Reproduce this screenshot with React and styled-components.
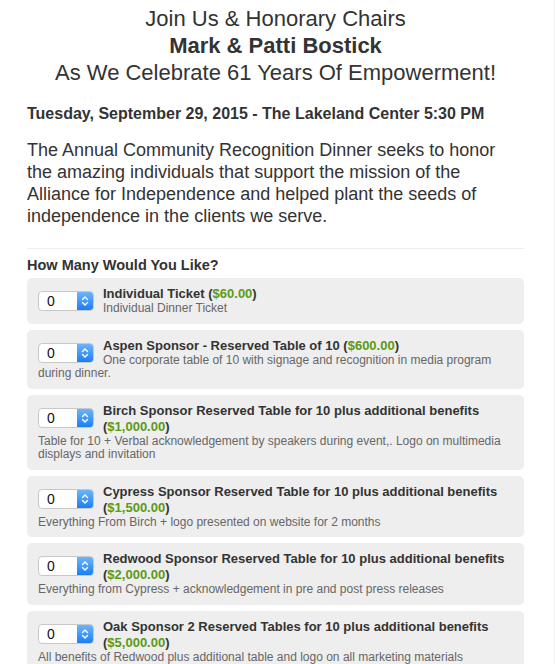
import React from 'react';
import styled, { createGlobalStyle } from 'styled-components';

const GlobalStyle = createGlobalStyle`
    html, body {
        margin: 0;
        padding: 0;
        background: #fff;
    }
    body {
        font-family: "Liberation Sans", Arial, Helvetica, sans-serif;
        color: #333;
    }
`

const Page = styled.div`
    width: 554px;
    min-height: 664px;
    border-right: 1px solid #f1f1f1;
    box-sizing: content-box;
`

const Content = styled.div`
    width: 497px;
    padding: 5px 0 0 27px;
`

const Heading = styled.div`
    text-align: center;
    font-size: 22px;
    line-height: 27px;
    color: #333;
`

const HeadingStrong = styled.div`
    font-weight: bold;
`

const EventLine = styled.div`
    margin-top: 18px;
    font-size: 16px;
    line-height: 20px;
    font-weight: bold;
    color: #333;
`

const Intro = styled.p`
    margin: 15px 0 0;
    font-size: 18px;
    line-height: 22px;
    color: #333;
`

const Divider = styled.hr`
    margin: 21px 0 8px;
    border: 0;
    border-top: 1px solid #eeeeee;
    height: 0;
`

const SectionLabel = styled.div`
    font-size: 14.5px;
    line-height: 17px;
    font-weight: bold;
    color: #333;
    margin-bottom: 4px;
`

const List = styled.div`
    display: flex;
    flex-direction: column;
    gap: 6px;
`

const Card = styled.div`
    background: #eeeeee;
    border-radius: 5px;
    padding: 8px 11px;
    &::after {
        content: "";
        display: block;
        clear: both;
    }
`

const QtySelect = styled.div`
    float: left;
    display: flex;
    width: 56px;
    height: 20px;
    margin: 5px 9px 0 0;
    background: #fff;
    border: 1px solid #c8c8c8;
    border-radius: 4px;
    box-sizing: border-box;
    overflow: hidden;
`

const QtyValue = styled.span`
    flex: 1;
    padding-left: 8px;
    font-size: 14px;
    line-height: 18px;
    color: #111;
`

const Stepper = styled.span`
    width: 16px;
    display: flex;
    align-items: center;
    justify-content: center;
    background: linear-gradient(#6db4fb, #1b7ff5);
`

const Title = styled.div`
    font-size: 13px;
    line-height: 16px;
    font-weight: bold;
    color: #333;
`

const Price = styled.span`
    color: #5b9a14;
`

const Desc = styled.div`
    font-size: 12px;
    line-height: 13.5px;
    color: #666;
`

const tickets = [
    { name: 'Individual Ticket', price: '$60.00', desc: 'Individual Dinner Ticket' },
    { name: 'Aspen Sponsor - Reserved Table of 10', price: '$600.00', desc: 'One corporate table of 10 with signage and recognition in media program during dinner.' },
    { name: 'Birch Sponsor Reserved Table for 10 plus additional benefits', price: '$1,000.00', desc: 'Table for 10 + Verbal acknowledgement by speakers during event,. Logo on multimedia displays and invitation' },
    { name: 'Cypress Sponsor Reserved Table for 10 plus additional benefits', price: '$1,500.00', desc: 'Everything From Birch + logo presented on website for 2 months' },
    { name: 'Redwood Sponsor Reserved Table for 10 plus additional benefits', price: '$2,000.00', desc: 'Everything from Cypress + acknowledgement in pre and post press releases' },
    { name: 'Oak Sponsor 2 Reserved Tables for 10 plus additional benefits', price: '$5,000.00', desc: 'All benefits of Redwood plus additional table and logo on all marketing materials' },
]

const StepperIcon = () => (
    <svg width="8" height="12" viewBox="0 0 8 12" fill="none" stroke="#fff" strokeWidth="1.4" strokeLinecap="round" strokeLinejoin="round">
        <path d="M1.5 4.5 L4 2 L6.5 4.5" />
        <path d="M1.5 7.5 L4 10 L6.5 7.5" />
    </svg>
)

const App = () => {
    return (
        <Page>
            <GlobalStyle />
            <Content>
                <Heading>
                    <div>Join Us &amp; Honorary Chairs</div>
                    <HeadingStrong>Mark &amp; Patti Bostick</HeadingStrong>
                    <div>As We Celebrate 61 Years Of Empowerment!</div>
                </Heading>
                <EventLine>Tuesday, September 29, 2015 - The Lakeland Center 5:30 PM</EventLine>
                <Intro>
                    The Annual Community Recognition Dinner seeks to honor the amazing individuals that support the mission of the Alliance for Independence and helped plant the seeds of independence in the clients we serve.
                </Intro>
                <Divider />
                <SectionLabel>How Many Would You Like?</SectionLabel>
                <List>
                    {tickets.map((t) => (
                        <Card key={t.name}>
                            <QtySelect>
                                <QtyValue>0</QtyValue>
                                <Stepper><StepperIcon /></Stepper>
                            </QtySelect>
                            <Title>
                                {t.name} (<Price>{t.price}</Price>)
                            </Title>
                            <Desc>{t.desc}</Desc>
                        </Card>
                    ))}
                </List>
            </Content>
        </Page>
    )
}

export default App
